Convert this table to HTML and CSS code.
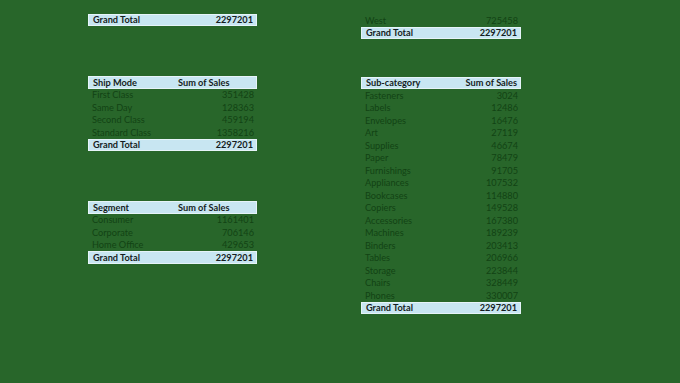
FILE: index.html
```html
<!DOCTYPE html>
<html>
<head>
<meta charset="utf-8">
<link rel="stylesheet" href="styles.css">
</head>
<body>
<div class="page">
  <div class="col col-left">
    <div class="pivot p-total">
      <div class="row bar"><span>Grand Total</span><span class="num">2297201</span></div>
    </div>
    <div class="pivot p-ship">
      <div class="row bar"><span class="label">Ship Mode</span><span>Sum of Sales</span></div>
      <div class="row"><span>First Class</span><span class="num">351428</span></div>
      <div class="row"><span>Same Day</span><span class="num">128363</span></div>
      <div class="row"><span>Second Class</span><span class="num">459194</span></div>
      <div class="row"><span>Standard Class</span><span class="num">1358216</span></div>
      <div class="row bar"><span>Grand Total</span><span class="num">2297201</span></div>
    </div>
    <div class="pivot p-seg">
      <div class="row bar"><span class="label">Segment</span><span>Sum of Sales</span></div>
      <div class="row"><span>Consumer</span><span class="num">1161401</span></div>
      <div class="row"><span>Corporate</span><span class="num">706146</span></div>
      <div class="row"><span>Home Office</span><span class="num">429653</span></div>
      <div class="row bar"><span>Grand Total</span><span class="num">2297201</span></div>
    </div>
  </div>
  <div class="col col-right">
    <div class="pivot p-region">
      <div class="row"><span>West</span><span class="num">725458</span></div>
      <div class="row bar"><span>Grand Total</span><span class="num">2297201</span></div>
    </div>
    <div class="pivot p-sub">
      <div class="row bar"><span>Sub-category</span><span class="num">Sum of Sales</span></div>
      <div class="row"><span>Fasteners</span><span class="num">3024</span></div>
      <div class="row"><span>Labels</span><span class="num">12486</span></div>
      <div class="row"><span>Envelopes</span><span class="num">16476</span></div>
      <div class="row"><span>Art</span><span class="num">27119</span></div>
      <div class="row"><span>Supplies</span><span class="num">46674</span></div>
      <div class="row"><span>Paper</span><span class="num">78479</span></div>
      <div class="row"><span>Furnishings</span><span class="num">91705</span></div>
      <div class="row"><span>Appliances</span><span class="num">107532</span></div>
      <div class="row"><span>Bookcases</span><span class="num">114880</span></div>
      <div class="row"><span>Copiers</span><span class="num">149528</span></div>
      <div class="row"><span>Accessories</span><span class="num">167380</span></div>
      <div class="row"><span>Machines</span><span class="num">189239</span></div>
      <div class="row"><span>Binders</span><span class="num">203413</span></div>
      <div class="row"><span>Tables</span><span class="num">206966</span></div>
      <div class="row"><span>Storage</span><span class="num">223844</span></div>
      <div class="row"><span>Chairs</span><span class="num">328449</span></div>
      <div class="row"><span>Phones</span><span class="num">330007</span></div>
      <div class="row bar"><span>Grand Total</span><span class="num">2297201</span></div>
    </div>
  </div>
</div>
</body>
</html>
```

FILE: styles.css
```css
html, body {
  margin: 0;
  padding: 0;
  background: #28662a;
}
body {
  width: 680px;
  height: 383px;
  overflow: hidden;
  font-family: Lato, "Open Sans", "Liberation Sans", sans-serif;
  font-size: 9.2px;
  color: #124314;
}
.page {
  display: flex;
}
.col {
  display: flex;
  flex-direction: column;
}
.col-left {
  margin-left: 88px;
  width: 169px;
  padding-top: 13.5px;
}
.col-right {
  margin-left: 104px;
  width: 160px;
  padding-top: 14px;
}
.p-ship { margin-top: 50px; }
.p-seg { margin-top: 50px; }
.p-sub { margin-top: 37.5px; }
.row {
  height: 12.5px;
  line-height: 12.5px;
  display: flex;
  align-items: center;
  padding: 1px 3px 0 4px;
  box-sizing: border-box;
  white-space: nowrap;
}
.row .num {
  margin-left: auto;
}
.row .label {
  width: 85px;
}
.bar {
  background: #c8e6f2;
  border: 1px solid #e6f4f9;
  color: #151d22;
  font-weight: 700;
}
```
